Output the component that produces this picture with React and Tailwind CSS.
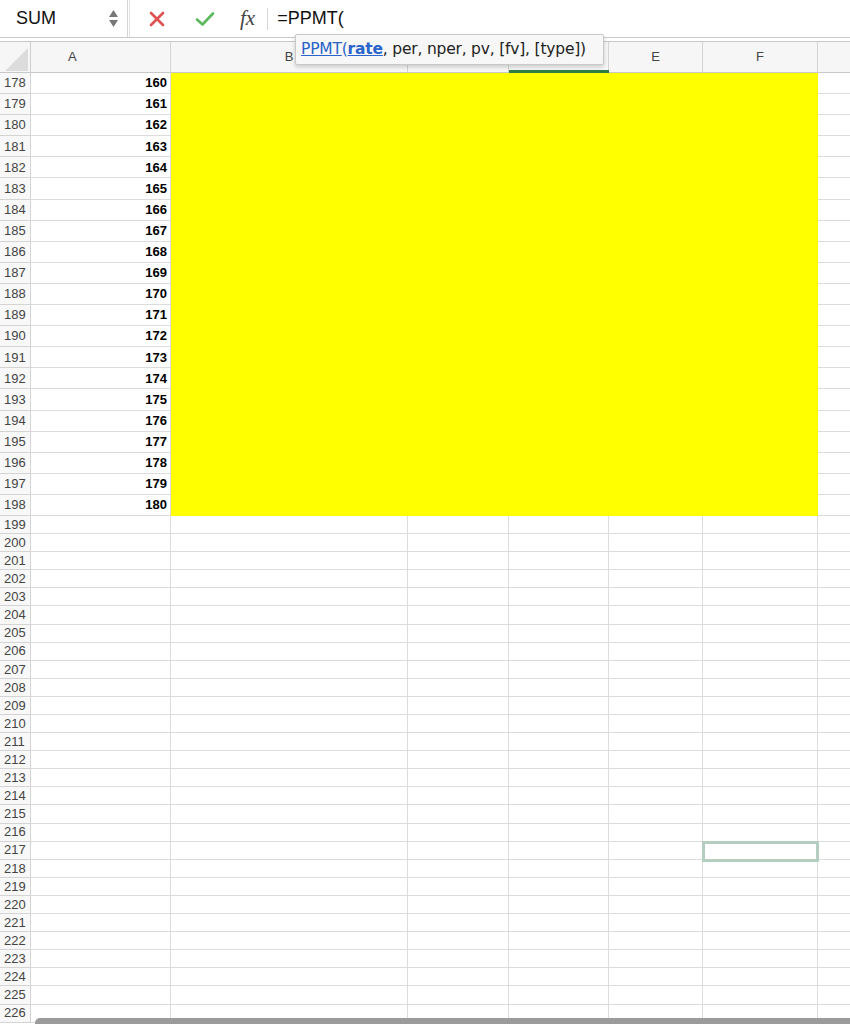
import React from "react";

const cols = [
  { key: "A", w: "w-[140px]" },
  { key: "B", w: "w-[237px]" },
  { key: "C", w: "w-[101px]" },
  { key: "D", w: "w-[100px]" },
  { key: "E", w: "w-[94px]" },
  { key: "F", w: "w-[115px]" },
];

function Toolbar() {
  return (
    <div className="h-[38px] flex items-center border-b border-[#c9c9c9] bg-white">
      <div className="w-[128px] h-full flex items-center justify-between border-r border-[#d4d4d4] pl-[16px] pr-[9px]">
        <span className="text-[18px] text-[#111]">SUM</span>
        <div className="flex flex-col gap-[3px]">
          <svg width="9" height="7" viewBox="0 0 9 7">
            <path d="M4.5 0 L9 7 L0 7 Z" fill="#777" />
          </svg>
          <svg width="9" height="7" viewBox="0 0 9 7">
            <path d="M0 0 L9 0 L4.5 7 Z" fill="#777" />
          </svg>
        </div>
      </div>
      <div className="w-[2px] h-full border-r border-[#e2e2e2]" />
      <div className="ml-[19px] w-[16px] h-[16px]">
        <svg width="16" height="16" viewBox="0 0 16 16">
          <path d="M2 2 L14 14 M14 2 L2 14" stroke="#e05252" strokeWidth="2.6" strokeLinecap="round" />
        </svg>
      </div>
      <div className="ml-[30px] w-[20px] h-[16px]">
        <svg width="20" height="16" viewBox="0 0 20 16">
          <path d="M2 8.5 L7.5 13.5 L18 2.5" stroke="#5cb85c" strokeWidth="2.6" fill="none" strokeLinecap="round" strokeLinejoin="round" />
        </svg>
      </div>
      <span className="ml-[25px] text-[21px] italic text-[#444] font-['Liberation_Serif',serif] leading-none">
        fx
      </span>
      <div className="ml-[12px] h-[22px] border-l border-[#d8d8d8]" />
      <span className="ml-[9px] text-[18px] text-[#111]">=PPMT(</span>
    </div>
  );
}

function HeaderRow() {
  return (
    <div className="h-[32px] flex border-b border-[#c8c8c8] border-t bg-[#f6f6f6] relative">
      <div className="w-[31px] h-full border-r border-[#cfcfcf] relative bg-[#f6f6f6]">
        <svg className="absolute left-[5px] top-[6px]" width="23" height="23" viewBox="0 0 23 23">
          <path d="M23 0 L23 23 L0 23 Z" fill="#dcdcdc" />
        </svg>
      </div>
      {cols.map((c) => (
        <div
          key={c.key}
          className={`${c.w} h-full border-r border-[#d4d4d4] flex items-center text-[13px] text-[#444] relative ${
            c.key === "A" ? "justify-start pl-[37px]" : "justify-center"
          }`}
        >
          {c.key}
          {c.key === "D" && (
            <div className="absolute left-0 right-[-1px] bottom-[-1px] h-[3px] bg-[#2f7d45]" />
          )}
        </div>
      ))}
      <div className="flex-1 h-full" />
    </div>
  );
}

function Row({ n, value, yellow, h }) {
  return (
    <div className={`${h} flex`}>
      <div className="w-[31px] h-full border-r border-b border-[#d4d4d4] bg-[#f8f8f8] text-[13px] text-[#444] pl-[4px] flex items-center">
        {n}
      </div>
      <div className="w-[140px] h-full border-r border-b border-[#dcdcdc] flex items-center justify-end pr-[3px] text-[13px] font-bold text-black">
        {value}
      </div>
      {yellow ? (
        <div className="w-[647px] h-full bg-[#ffff00]" />
      ) : (
        cols.slice(1).map((c) => (
          <div key={c.key} className={`${c.w} h-full border-r border-b border-[#dcdcdc]`} />
        ))
      )}
      <div className="flex-1 h-full border-b border-[#dcdcdc]" />
    </div>
  );
}

export default function App() {
  const big = [];
  for (let i = 178; i <= 198; i++) big.push(i);
  const small = [];
  for (let i = 199; i <= 226; i++) small.push(i);

  return (
    <div className="w-[850px] h-[1024px] overflow-hidden bg-white relative font-['Liberation_Sans',Arial,sans-serif]">
      <Toolbar />
      <div className="h-[3px] bg-white" />
      <HeaderRow />
      <div className="relative">
        {big.map((n) => (
          <Row key={n} n={n} value={n - 18} yellow h="h-[21.1px]" />
        ))}
        {small.map((n) => (
          <Row key={n} n={n} value="" h="h-[18.1px]" />
        ))}
        <div className="absolute left-[702px] top-[768px] w-[117px] h-[21px] border-[3px] border-[#b4cfbf]" />
      </div>

      <div className="absolute left-[295px] top-[34px] w-[309px] h-[31px] bg-[#f7f7f7] border border-[#c9c9c9] rounded-[2px] shadow-[0_2px_4px_rgba(0,0,0,0.18)] flex items-center pl-[5px] text-[15.5px] text-[#222] font-['DejaVu_Sans',sans-serif] tracking-[-0.2px]">
        <span className="text-[#2a63c9] underline">PPMT</span>
        <span className="text-[#2a63c9]">(</span>
        <span className="text-[#2a63c9] underline font-bold">rate</span>
        <span>, per, nper, pv, [fv], [type])</span>
      </div>

      <div className="absolute left-[35px] top-[1018px] w-[830px] h-[10px] rounded-[5px] bg-[#9b9b9b]" />
    </div>
  );
}
